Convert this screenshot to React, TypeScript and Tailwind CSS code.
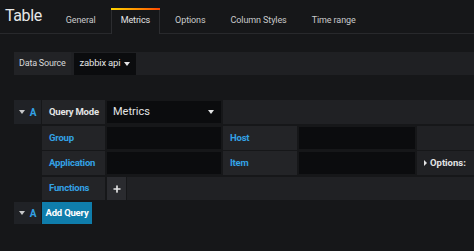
import { Plus } from 'lucide-react';

const tabs = ['General', 'Metrics', 'Options', 'Column Styles', 'Time range'];

function Caret() {
  return (
    <svg width="6" height="4" viewBox="0 0 6 4" className="fill-current shrink-0">
      <path d="M0 0h6L3 4z" />
    </svg>
  );
}

function RowTag() {
  return (
    <div className="w-[27px] shrink-0 h-full bg-[#202226] flex items-center justify-center gap-[5px] text-[10px] font-bold text-[#33a2e5] mr-[1px]">
      <span className="text-[#c8c9ca]"><Caret /></span>
      <span>A</span>
    </div>
  );
}

function Label({ text, blue, w }: { text: string; blue?: boolean; w: string }) {
  return (
    <div className={`${w} shrink-0 h-full bg-[#232427] flex items-center pl-[7px] whitespace-nowrap tracking-[-0.2px] text-[9.5px] font-bold ${blue ? 'text-[#33a2e5]' : 'text-[#e3e4e5]'}`}>
      {text}
    </div>
  );
}

function Input({ w }: { w: string }) {
  return <div className={`${w} shrink-0 h-[22px] bg-[#0b0c0e] mx-[2px]`} />;
}

export default function App() {
  return (
    <div className="w-[474px] h-[251px] bg-[#161719] overflow-hidden" style={{ fontFamily: 'Roboto, "Liberation Sans", sans-serif' }}>
      {/* Header */}
      <div className="h-[34px] flex items-end border-b border-[#28292c]">
        <div className="h-full flex items-center pl-[5px] pb-[1px] text-[16px] tracking-[-0.4px] text-[#e6e7e8] mr-[14px]">Table</div>
        {tabs.map((t) => {
          const active = t === 'Metrics';
          return (
            <div
              key={t}
              className={`relative h-[26px] px-[9px] mr-[5px] flex items-center whitespace-nowrap text-[9px] tracking-[-0.1px] -mb-[1px] border-x ${
                active ? 'bg-[#161719] border-[#2c2d30] text-[#e3e4e5]' : 'text-[#c9cacb] border-transparent'
              }`}
            >
              {active && <div className="absolute left-[-1px] right-[-1px] top-0 h-[2px] bg-gradient-to-r from-[#ffd500] to-[#ff4400]" />}
              {t}
            </div>
          );
        })}
      </div>

      {/* Data source */}
      <div className="mt-[18px] ml-[14px] h-[23px] flex items-center bg-[#1f2023]">
        <div className="h-full bg-[#222326] flex items-center px-[5px] whitespace-nowrap text-[9px] tracking-[-0.2px] text-[#d8d9da]">Data Source</div>
        <div className="h-[22px] bg-[#0b0c0e] ml-[3px] flex items-center px-[6px] gap-[4px] whitespace-nowrap text-[9.5px] tracking-[-0.2px] text-[#e3e4e5]">
          zabbix api
          <Caret />
        </div>
      </div>

      {/* Queries */}
      <div className="mt-[25px] ml-[14px] flex flex-col">
        <div className="h-[24px] flex items-center">
          <RowTag />
          <Label text="Query Mode" w="w-[63px]" />
          <div className="w-[114px] shrink-0 h-[22px] bg-[#0b0c0e] mx-[2px] flex items-center justify-between pl-[6px] pr-[7px] text-[11px] text-[#e3e4e5]">
            Metrics
            <Caret />
          </div>
          <div className="flex-1 h-full bg-[#202124]" />
        </div>

        <div className="h-[24px] mt-[2px] flex items-center">
          <div className="w-[28px] shrink-0" />
          <Label text="Group" blue w="w-[63px]" />
          <Input w="w-[114px]" />
          <Label text="Host" blue w="w-[74px]" />
          <Input w="w-[116px]" />
          <div className="flex-1 h-full bg-[#202124]" />
        </div>

        <div className="h-[24px] mt-[1px] flex items-center">
          <div className="w-[28px] shrink-0" />
          <Label text="Application" blue w="w-[63px]" />
          <Input w="w-[114px]" />
          <Label text="Item" blue w="w-[74px]" />
          <Input w="w-[116px]" />
          <div className="flex-1 h-full bg-[#202124] flex items-center pl-[7px] gap-[3px] whitespace-nowrap text-[9.5px] font-bold text-[#e3e4e5]">
            <svg width="3" height="6" viewBox="0 0 3 6" className="fill-current"><path d="M0 0v6l3-3z" /></svg>
            Options:
          </div>
        </div>

        <div className="h-[23px] mt-[2px] flex items-center">
          <div className="w-[28px] shrink-0" />
          <Label text="Functions" blue w="w-[63px]" />
          <div className="w-[19px] shrink-0 h-full bg-[#2a2b2f] ml-[2px] mr-[1px] flex items-center justify-center text-[#e3e4e5]">
            <Plus size={10} strokeWidth={4} />
          </div>
          <div className="flex-1 h-full bg-[#202124]" />
        </div>

        <div className="h-[22px] mt-[2px] flex items-center">
          <RowTag />
          <div className="w-[50px] shrink-0 h-full bg-[#0f7dab] flex items-center justify-center whitespace-nowrap tracking-[-0.2px] text-[9.5px] font-bold text-white">Add Query</div>
        </div>
      </div>
    </div>
  );
}
